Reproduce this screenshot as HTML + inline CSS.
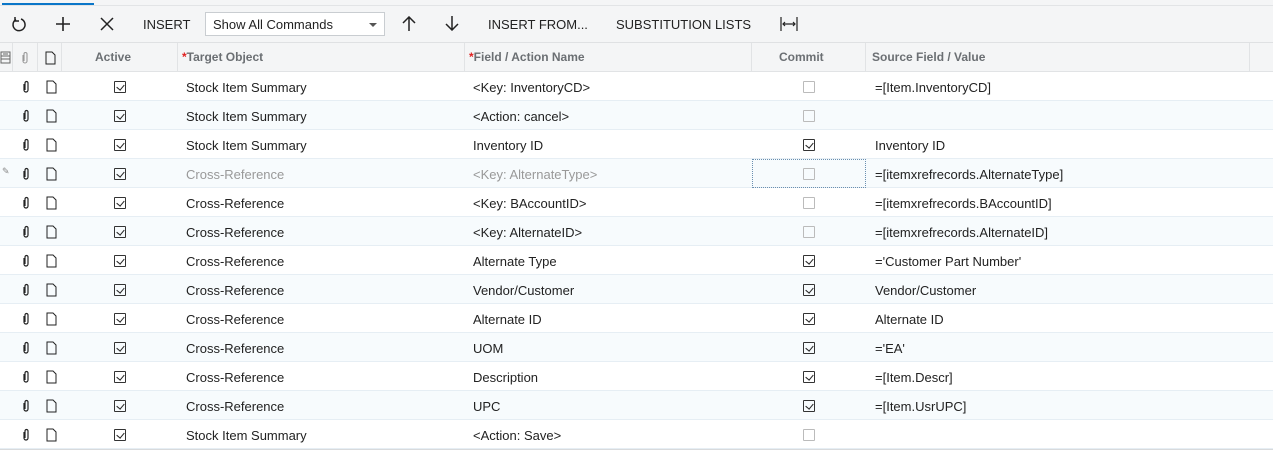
<!DOCTYPE html><html><head><style>
*{box-sizing:border-box;margin:0;padding:0}
body{width:1273px;height:461px;background:#fff;font-family:"Liberation Sans",sans-serif;font-size:13px;color:#222;position:relative;overflow:hidden}
.top{position:absolute;left:0;top:0;width:1273px;height:43px;background:#f4f5f6;border-bottom:1px solid #dfe1e3}
.tab{position:absolute;left:2px;top:3px;width:92px;height:2px;background:#0a76c8}
.topline{position:absolute;left:0;top:5px;width:1273px;height:1px;background:#e2e4e6}
.tb{position:absolute;top:17px;font-size:13px;color:#222}
.sel{position:absolute;left:205px;top:12px;width:180px;height:24px;border:1px solid #c9cdd1;background:#fff;padding:4px 7px;font-size:13px}
.sel:after{content:"";position:absolute;right:7px;top:10px;border:4px solid transparent;border-top:4px solid #555}
.hdr{position:absolute;top:43px;left:0;width:1273px;height:29px;background:#f4f5f6;border-bottom:1px solid #e1e3e5}
.c{position:absolute;top:0;height:100%;border-right:1px solid #e1e3e5}
.ht{position:absolute;top:7px;font-size:12px;font-weight:bold;color:#6b6f73}
.row{position:absolute;left:0;width:1273px;height:29px;border-bottom:1px solid #e6eef4}
.row span{position:absolute;top:8px}
.cb{position:absolute;width:12px;height:12px;border:1px solid #333;border-radius:1px}
.cb.on:after{content:"";position:absolute;left:3px;top:1px;width:4px;height:6px;border-right:1.5px solid #222;border-bottom:1.5px solid #222;transform:rotate(40deg)}
.cb.off{border-color:#bbb}
.first{position:absolute;left:0;top:72px;width:12px;height:378px;background:#f4f5f6;border-right:1px solid #e1e3e5}
</style></head><body>
<div class="top"><div class="tab"></div><div class="topline"></div>
<svg style="position:absolute;left:11px;top:16px" width="16" height="16" viewBox="0 0 16 16"><path d="M5 3.5A6 6 0 1 0 10 3" fill="none" stroke="#222" stroke-width="1.5"/><path d="M4 1v4h4" fill="none" stroke="#222" stroke-width="1.5"/></svg>
<svg style="position:absolute;left:55px;top:16px" width="16" height="16"><path d="M8 1v14M1 8h14" stroke="#222" stroke-width="1.6"/></svg>
<svg style="position:absolute;left:100px;top:17px" width="14" height="14"><path d="M1 1l12 12M13 1L1 13" stroke="#222" stroke-width="1.5"/></svg>
<div class="tb" style="left:143px">INSERT</div>
<div class="sel">Show All Commands</div>
<svg style="position:absolute;left:402px;top:16px" width="14" height="15"><path d="M7 1v14M1 7l6-6 6 6" fill="none" stroke="#222" stroke-width="1.5"/></svg>
<svg style="position:absolute;left:445px;top:16px" width="14" height="15"><path d="M7 0v14M1 8l6 6 6-6" fill="none" stroke="#222" stroke-width="1.5"/></svg>
<div class="tb" style="left:488px">INSERT FROM...</div>
<div class="tb" style="left:616px">SUBSTITUTION LISTS</div>
<svg style="position:absolute;left:780px;top:17px" width="18" height="14"><path d="M1 0v14M17 0v14M3 7h12M5 5l-2 2 2 2M13 5l2 2-2 2" fill="none" stroke="#222" stroke-width="1.2"/></svg>
</div>
<div class="hdr">
<div class="c" style="left:0;width:13px"></div><div class="c" style="left:13px;width:25px"></div><div class="c" style="left:38px;width:24px"></div><div class="c" style="left:62px;width:116px"></div><div class="c" style="left:178px;width:287px"></div><div class="c" style="left:465px;width:287px"></div><div class="c" style="left:752px;width:114px"></div><div class="c" style="left:866px;width:384px"></div>
<svg style="position:absolute;left:0;top:8px" width="11" height="13"><rect x="1" y="1" width="9" height="11" fill="none" stroke="#666"/><path d="M1 5h9M1 8h9M3 3h5" stroke="#666"/></svg>
<svg style="position:absolute;left:20px;top:8px" width="10" height="14"><path d="M3 4v6a2 2 0 0 0 4 0V3a1.5 1.5 0 0 0-3 0v7" fill="none" stroke="#999" stroke-width="1.1"/></svg>
<svg style="position:absolute;left:45px;top:8px" width="11" height="14"><path d="M1 1h6l3 3v9H1z" fill="none" stroke="#222"/></svg>
<div class="ht" style="left:95px">Active</div>
<div class="ht" style="left:182px"><b style="color:#e02020">*</b>Target Object</div>
<div class="ht" style="left:469px"><b style="color:#e02020">*</b>Field / Action Name</div>
<div class="ht" style="left:779px">Commit</div>
<div class="ht" style="left:872px">Source Field / Value</div>
</div>
<div class="first"></div>
<div id="rows"></div>
<script>
var d=[["Stock Item Summary","<Key: InventoryCD>",0,"=[Item.InventoryCD]"],["Stock Item Summary","<Action: cancel>",0,""],["Stock Item Summary","Inventory ID",1,"Inventory ID"],["Cross-Reference","<Key: AlternateType>",0,"=[itemxrefrecords.AlternateType]"],["Cross-Reference","<Key: BAccountID>",0,"=[itemxrefrecords.BAccountID]"],["Cross-Reference","<Key: AlternateID>",0,"=[itemxrefrecords.AlternateID]"],["Cross-Reference","Alternate Type",1,"='Customer Part Number'"],["Cross-Reference","Vendor/Customer",1,"Vendor/Customer"],["Cross-Reference","Alternate ID",1,"Alternate ID"],["Cross-Reference","UOM",1,"='EA'"],["Cross-Reference","Description",1,"=[Item.Descr]"],["Cross-Reference","UPC",1,"=[Item.UsrUPC]"],["Stock Item Summary","<Action: Save>",0,""]];
var h="";function e(s){return s.replace(/</g,"&lt;").replace(/>/g,"&gt;")}
d.forEach(function(r,i){var t=72+i*29,g=i==3?"color:#999":"";
h+='<div class="row" style="top:'+t+'px;background:'+(i%2?'#f7fbfd':'#fff')+'">'+
(i==3?'<span style="left:2px;top:7px;font-size:9px;color:#888">✎</span>':'')+
'<svg style="position:absolute;left:21px;top:8px" width="10" height="14"><path d="M3 4v6a2 2 0 0 0 4 0V3a1.5 1.5 0 0 0-3 0v7" fill="none" stroke="#222" stroke-width="1.2"/></svg>'+
'<svg style="position:absolute;left:46px;top:8px" width="11" height="14"><path d="M1 1h6l3 3v9H1z" fill="none" stroke="#222"/></svg>'+
'<div class="cb on" style="left:114px;top:9px"></div>'+
'<span style="left:186px;'+g+'">'+r[0]+'</span><span style="left:473px;'+g+'">'+e(r[1])+'</span>'+
(i==3?'<div style="position:absolute;left:752px;top:0;width:114px;height:29px;border:1px dotted #6a8fb0"></div>':'')+
'<div class="cb '+(r[2]?'on':'off')+'" style="left:803px;top:9px"></div>'+
'<span style="left:875px">'+r[3]+'</span></div>';});
document.getElementById("rows").innerHTML=h;
</script>
<div style="position:absolute;left:0;top:449px;width:1273px;height:1px;background:#d8dadc"></div>
</body></html>
